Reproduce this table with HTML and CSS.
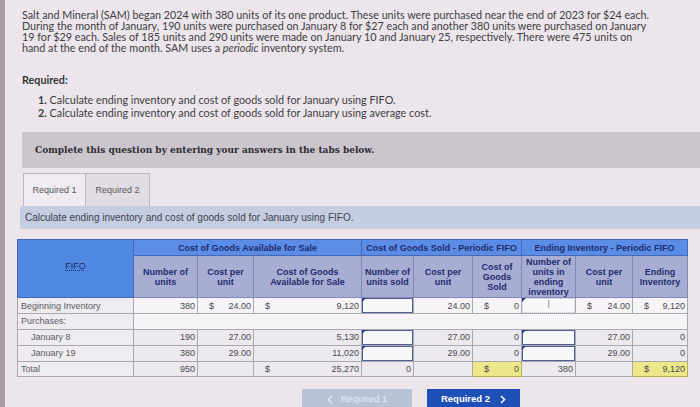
FILE: index.html
```html
<!DOCTYPE html>
<html lang="en">
<head>
<meta charset="utf-8">
<title>SAM inventory</title>
<link rel="stylesheet" href="styles.css">
</head>
<body>
<p class="intro">Salt and Mineral (SAM) began 2024 with 380 units of its one product. These units were purchased near the end of 2023 for $24 each.<br>During the month of January, 190 units were purchased on January 8 for $27 each and another 380 units were purchased on January<br>19 for $29 each. Sales of 185 units and 290 units were made on January 10 and January 25, respectively. There were 475 units on<br>hand at the end of the month. SAM uses a <em>periodic</em> inventory system.</p>
<p class="req-title">Required:</p>
<ol class="tasks">
  <li><b>1.</b> Calculate ending inventory and cost of goods sold for January using FIFO.</li>
  <li><b>2.</b> Calculate ending inventory and cost of goods sold for January using average cost.</li>
</ol>
<div class="notice">Complete this question by entering your answers in the tabs below.</div>
<div class="tabs">
  <div class="tab active">Required 1</div>
  <div class="tab">Required 2</div>
</div>
<div class="subtitle">Calculate ending inventory and cost of goods sold for January using FIFO.</div>
<table class="grid">
  <colgroup>
    <col style="width:116px"><col style="width:64px"><col style="width:56px"><col style="width:108px">
    <col style="width:52px"><col style="width:59px"><col style="width:49px">
    <col style="width:54px"><col style="width:57px"><col style="width:55px">
  </colgroup>
  <thead>
    <tr class="grp-row">
      <th class="fifo" rowspan="2"><span>FIFO</span></th>
      <th class="grp" colspan="3">Cost of Goods Available for Sale</th>
      <th class="grp gs" colspan="3">Cost of Goods Sold - Periodic FIFO</th>
      <th class="grp gs" colspan="3">Ending Inventory - Periodic FIFO</th>
    </tr>
    <tr class="sub">
      <th>Number of<br>units</th>
      <th>Cost per<br>unit</th>
      <th>Cost of Goods<br>Available for Sale</th>
      <th class="gs">Number of<br>units sold</th>
      <th>Cost per<br>unit</th>
      <th>Cost of<br>Goods<br>Sold</th>
      <th class="gs">Number of<br>units in<br>ending<br>inventory</th>
      <th>Cost per<br>unit</th>
      <th>Ending<br>Inventory</th>
    </tr>
  </thead>
  <tbody>
    <tr>
      <td class="lbl">Beginning Inventory</td>
      <td class="w">380</td>
      <td class="w"><div class="m"><span>$</span><span>24.00</span></div></td>
      <td class="w"><div class="m"><span>$</span><span>9,120</span></div></td>
      <td class="inp"><div class="box"></div></td>
      <td class="w">24.00</td>
      <td class="w"><div class="m"><span>$</span><span>0</span></div></td>
      <td class="inp"><div class="box focus"><span class="caret">I</span></div></td>
      <td class="w"><div class="m"><span>$</span><span>24.00</span></div></td>
      <td class="w"><div class="m"><span>$</span><span>9,120</span></div></td>
    </tr>
    <tr>
      <td class="lbl">Purchases:</td>
      <td colspan="9" class="blank"></td>
    </tr>
    <tr>
      <td class="lbl ind">January 8</td>
      <td>190</td>
      <td>27.00</td>
      <td>5,130</td>
      <td class="inp"><div class="box"></div></td>
      <td>27.00</td>
      <td>0</td>
      <td class="inp"><div class="box"></div></td>
      <td>27.00</td>
      <td>0</td>
    </tr>
    <tr>
      <td class="lbl ind">January 19</td>
      <td>380</td>
      <td>29.00</td>
      <td>11,020</td>
      <td class="inp"><div class="box"></div></td>
      <td>29.00</td>
      <td>0</td>
      <td class="inp"><div class="box"></div></td>
      <td>29.00</td>
      <td>0</td>
    </tr>
    <tr>
      <td class="lbl">Total</td>
      <td>950</td>
      <td></td>
      <td><div class="m"><span>$</span><span>25,270</span></div></td>
      <td>0</td>
      <td></td>
      <td class="yel"><div class="m"><span>$</span><span>0</span></div></td>
      <td>380</td>
      <td></td>
      <td class="yel"><div class="m"><span>$</span><span>9,120</span></div></td>
    </tr>
  </tbody>
</table>
<div class="nav">
  <button class="btn prev" type="button"><svg width="6" height="9" viewBox="0 0 6 9"><path d="M5 1 1.5 4.5 5 8" fill="none" stroke="currentColor" stroke-width="1.3"/></svg>Required 1</button>
  <button class="btn next" type="button">Required 2<svg width="6" height="9" viewBox="0 0 6 9"><path d="M1 1 4.5 4.5 1 8" fill="none" stroke="currentColor" stroke-width="1.5"/></svg></button>
</div>
</body>
</html>
```
FILE: styles.css
```css
* { box-sizing: border-box; }
html, body { margin: 0; }
body {
  background: #ece6ec;
  min-height: 100vh;
  box-shadow: inset 5px 0 0 #a79ea9;
  font-family: "Liberation Sans", Arial, sans-serif;
  color: #444;
  overflow: hidden;
}
.intro {
  margin: 0;
  padding: 9px 0 0 22px;
  font: 10.75px/11px Lato, "Noto Sans", sans-serif;
  color: #3e3c41;
  white-space: nowrap;
}
.intro em { font-style: italic; }
.req-title {
  margin: 21px 0 0 22px;
  font: 700 10.75px/11px Lato, "Noto Sans", sans-serif;
  color: #38363a;
}
.tasks {
  margin: 8px 0 0;
  padding: 0 0 0 38px;
  list-style: none;
  font: 10.8px/13px Lato, "Noto Sans", sans-serif;
  color: #3e3c41;
}
.tasks b { font-weight: 700; }
.notice {
  margin: 13px 0 0 22px;
  height: 36px;
  background: #cbc5cd;
  display: flex;
  align-items: center;
  padding-left: 13px;
  font: 700 9px "DejaVu Serif", serif;
  color: #2f2d33;
}
.tabs {
  display: flex;
  margin: 5px 0 0 23px;
  height: 33px;
}
.tab {
  width: 65px;
  display: flex;
  align-items: center;
  justify-content: center;
  font-size: 9px;
  color: #58565c;
  border: 1px solid #bdb6c0;
  border-bottom: none;
  background: #e2dde4;
}
.tab.active { width: 62px; background: #f0ebf1; border-right: none; }
.subtitle {
  margin-left: 20px;
  height: 23px;
  background: #c5cde0;
  display: flex;
  align-items: center;
  padding-left: 5px;
  font-size: 10px;
  color: #3e4252;
}
.grid {
  margin: 10px 0 0 17px;
  border-collapse: collapse;
  table-layout: fixed;
  width: 670px;
}
.grid th {
  font: 700 9px/10px "Liberation Sans", Arial, sans-serif;
  color: #1f2c6c;
  text-align: center;
  padding: 0 2px;
  border: 1px solid #8188b8;
}
.grid .grp { background: #5b8de6; height: 16px; border-color: #4468b8; }
.grid .fifo {
  background: #5088e2;
  border-color: #4468b8;
  font-weight: 400;
  padding-bottom: 6px;
}
.grid .fifo span { text-decoration: underline dotted; }
.grid .sub th { background: #a8add4; height: 42px; }
.grid th.gs { border-left: 1px solid #2d4a96; }
.grid td {
  height: 15.6px;
  border: 1px solid #aaa7ad;
  background: #eceaee;
  font-size: 9px;
  line-height: 10px;
  color: #4a4a4e;
  padding: 0 2px 0 3px;
  text-align: right;
  white-space: nowrap;
}
.grid td.w, .grid td.blank { background: #f6f4f7; }
.grid td.lbl { text-align: left; color: #5b5a66; background: #eeecf0; }
.grid td.ind { padding-left: 13px; }
.m { display: flex; justify-content: space-between; padding-left: 8px; }
.grid td.inp { padding: 0; background: #f6f4f7; }
.box {
  position: relative;
  height: 15px;
  border: 1.5px solid #4f6298;
  background: #f8f7fa;
  text-align: center;
}
.box::before {
  content: "";
  position: absolute;
  left: -1px;
  top: -1px;
  border-top: 4px solid #1e3f8f;
  border-right: 4px solid transparent;
}
.box.focus { border-color: #c4c1cc; border-style: dotted; }
.caret { color: #9a98a0; font-size: 10px; line-height: 12px; }
.grid td.yel { background: #ede98a; border: 1px solid #b5af4a; }
.nav {
  display: flex;
  gap: 15px;
  margin: 12px 0 0 302px;
}
.btn {
  height: 18px;
  border: 0;
  display: flex;
  align-items: center;
  justify-content: center;
  gap: 8px;
  font: 9.5px/10px "Liberation Sans", Arial, sans-serif;
  padding: 2px 0 0;
}
.prev { width: 110px; background: #b9c3d6; color: #e6ebf3; }
.next { width: 93px; background: #1f50b6; color: #fff; font-weight: 700; gap: 10px; }
```
